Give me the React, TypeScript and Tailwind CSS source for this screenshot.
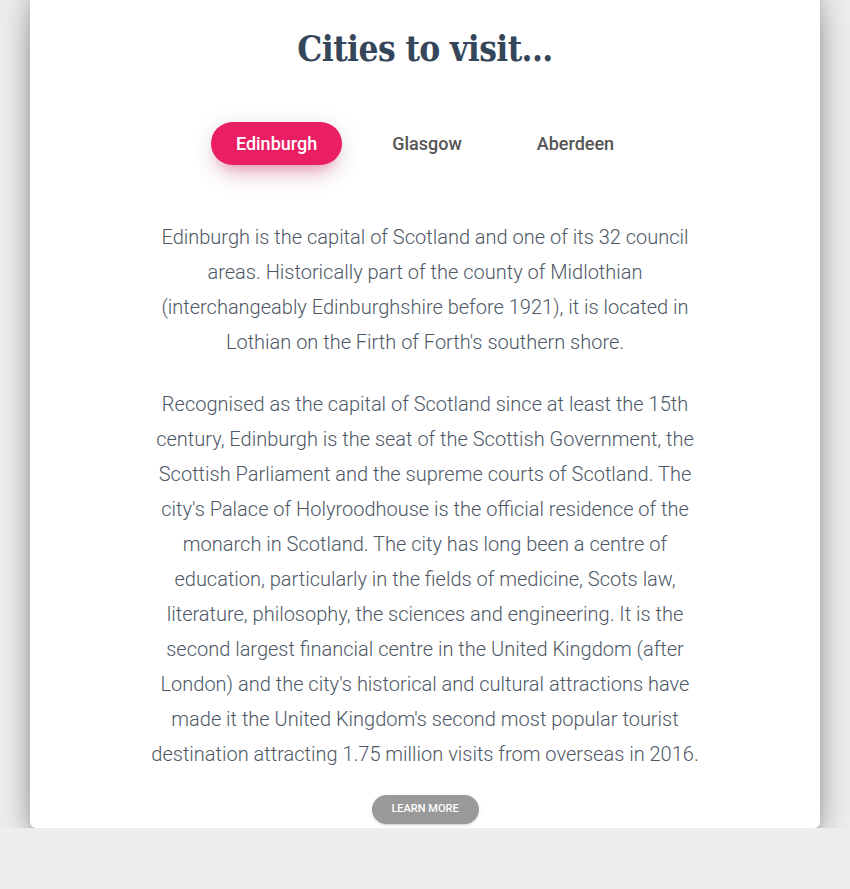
import React from "react";

const tabs = ["Edinburgh", "Glasgow", "Aberdeen"];

export default function App() {
  return (
    <div className="min-h-screen bg-[#ededed]" style={{ fontFamily: "Roboto, 'Liberation Sans', sans-serif" }}>
      <div className="h-[828px] overflow-hidden px-[30px]">
        <div className="mt-[-20px] h-[848px] rounded-b-[6px] bg-white shadow-[0_16px_38px_-12px_rgba(0,0,0,0.56),0_4px_25px_0_rgba(0,0,0,0.12),0_8px_10px_-5px_rgba(0,0,0,0.2)] flex flex-col items-center">
          <h2
            className="mt-[49px] text-[35px] font-bold leading-[40px] text-[#36465a]"
            style={{ fontFamily: "'DejaVu Serif Condensed', 'DejaVu Serif', 'Liberation Serif', serif", letterSpacing: "-0.6px" }}
          >
            Cities to visit...
          </h2>
          <div className="mt-[53px] flex gap-[25px]">
            {tabs.map((t, i) => (
              <div
                key={t}
                className={
                  i === 0
                    ? "h-[43px] rounded-full bg-[#e91e63] px-[25px] text-[18px] font-medium leading-[43px] text-white shadow-[0_14px_26px_-12px_rgba(233,30,99,0.42),0_4px_23px_0_rgba(0,0,0,0.12),0_8px_10px_-5px_rgba(233,30,99,0.2)]"
                    : "h-[43px] rounded-full px-[25px] text-[18px] font-medium leading-[43px] text-[#555555]"
                }
              >
                {t}
              </div>
            ))}
          </div>
          <div className="mt-[55px] w-[560px] text-center text-[20px] font-light leading-[35px] text-[#4d5866]">
            <p className="mb-[27px]">
              Edinburgh is the capital of Scotland and one of its 32 council areas. Historically part of the county of
              Midlothian (interchangeably Edinburghshire before 1921), it is located in Lothian on the Firth of
              Forth's southern shore.
            </p>
            <p>
              Recognised as the capital of Scotland since at least the 15th century, Edinburgh is the seat of the
              Scottish Government, the Scottish Parliament and the supreme courts of Scotland. The city's Palace of
              Holyroodhouse is the official residence of the monarch in Scotland. The city has long been a centre of
              education, particularly in the fields of medicine, Scots law, literature, philosophy, the sciences and
              engineering. It is the second largest financial centre in the United Kingdom (after London) and the
              city's historical and cultural attractions have made it the United Kingdom's second most popular tourist
              destination attracting 1.75 million visits from overseas in 2016.
            </p>
          </div>
          <button className="mt-[23px] h-[29px] w-[107px] rounded-full bg-[#999999] text-[11px] font-medium uppercase text-white shadow-[0_2px_2px_0_rgba(153,153,153,0.14),0_3px_1px_-2px_rgba(153,153,153,0.2),0_1px_5px_0_rgba(153,153,153,0.12)]">
            Learn more
          </button>
        </div>
      </div>
    </div>
  );
}
